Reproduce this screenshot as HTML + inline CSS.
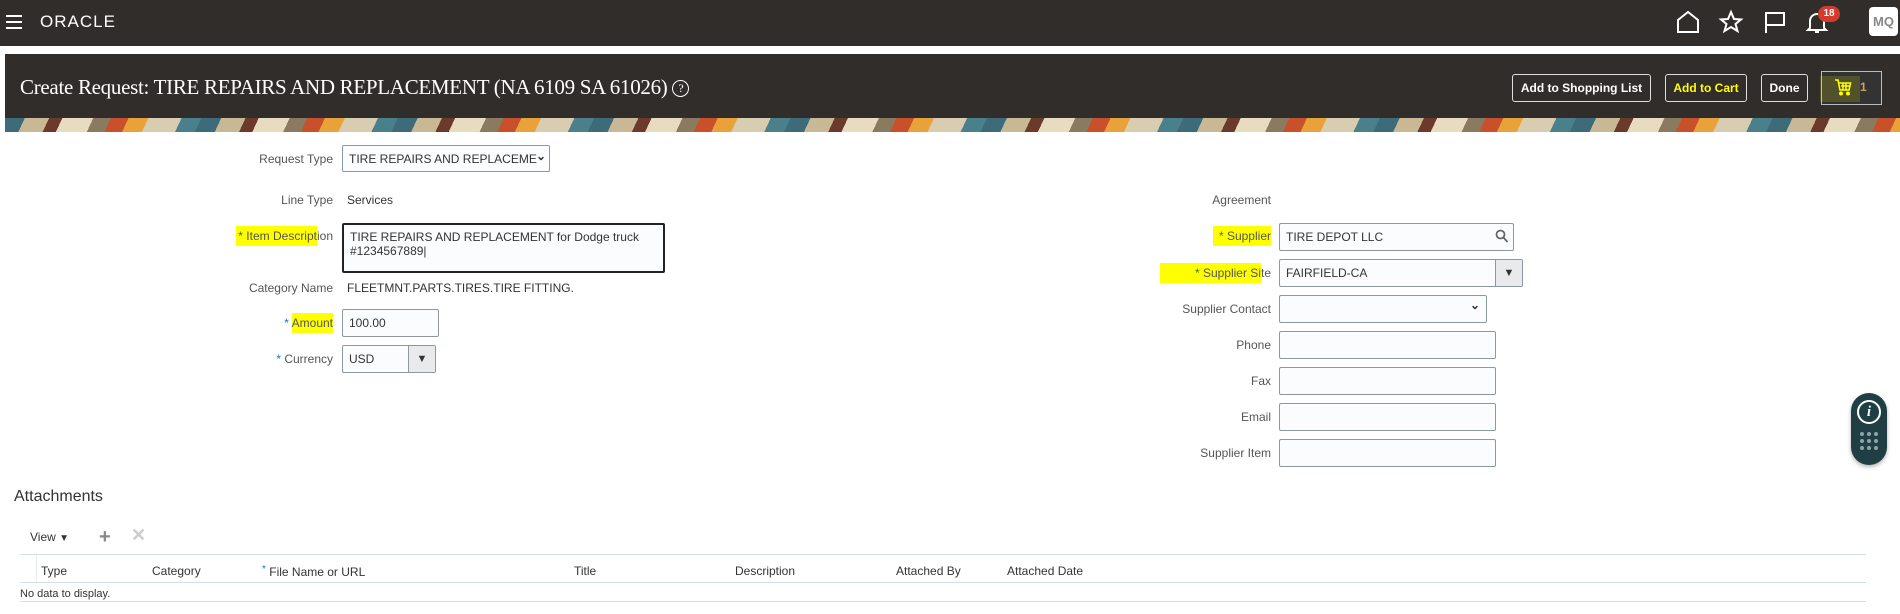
<!DOCTYPE html>
<html><head><meta charset="utf-8"><style>
*{box-sizing:border-box;margin:0;padding:0}
body{width:1900px;height:614px;background:#fff;font-family:"Liberation Sans",sans-serif;font-size:12px;color:#333;position:relative;overflow:hidden}
.a{position:absolute}
.top{left:0;top:0;width:1900px;height:46px;background:#312d2a}
.hdr{left:5px;top:54px;width:1895px;height:64px;background:#312d2a}
.band{left:5px;top:118px;width:1895px;height:14px;background:repeating-linear-gradient(115deg,#3d6b7a 0 18px,#c9b896 18px 40px,#6b3a2a 40px 52px,#e8dcc0 52px 80px,#8a7a60 80px 96px,#c8502a 96px 112px,#e9a23a 112px 130px,#d8cdb0 130px 160px,#4a7f8c 160px 178px)}
.btn{top:74px;height:28px;border:1px solid #ddd;border-radius:3px;color:#fff;font-weight:bold;font-size:12px;line-height:26px;text-align:center}
.lbl{text-align:right;width:300px;color:#555}
.inp{border:1px solid #8c98a4;background:#fbfcfd;border-radius:2px;height:28px;padding-left:6px;line-height:26px;color:#333}
.hl{background:#ffff00}
.st{color:#1a73c8}
.th{top:564px;color:#333;font-size:12px}
</style></head><body>
<div class="a top"></div>
<div class="a" style="left:6px;top:15px;width:16px;height:2px;background:#fff;box-shadow:0 6px 0 #fff,0 12px 0 #fff"></div>
<div class="a" style="left:40px;top:12px;color:#fff;font-size:17px;letter-spacing:1px">ORACLE</div>
<svg class="a" style="left:1675px;top:9px" width="26" height="26" viewBox="0 0 26 26" fill="none" stroke="#fff" stroke-width="2"><path d="M3 11 L13 3 L23 11 V23 H3 Z"/></svg>
<svg class="a" style="left:1718px;top:9px" width="26" height="26" viewBox="0 0 26 26" fill="none" stroke="#fff" stroke-width="2"><path d="M13 3 L16 10 L23 10.5 L17.5 15 L19.5 22 L13 18 L6.5 22 L8.5 15 L3 10.5 L10 10 Z"/></svg>
<svg class="a" style="left:1762px;top:9px" width="26" height="26" viewBox="0 0 26 26" fill="none" stroke="#fff" stroke-width="2"><path d="M4 24 V4 H22 V16 H4"/></svg>
<svg class="a" style="left:1804px;top:9px" width="26" height="26" viewBox="0 0 26 26" fill="none" stroke="#fff" stroke-width="2"><path d="M6 19 V12 A7 7 0 0 1 20 12 V19 L22 21 H4 Z M11 23 H15"/></svg>
<div class="a" style="left:1818px;top:6px;width:22px;height:16px;border-radius:8px;background:#d33b2c;color:#fff;font-size:10px;font-weight:bold;text-align:center;line-height:16px">18</div>
<div class="a" style="left:1869px;top:7px;width:29px;height:29px;background:#fff;border-radius:4px;color:#888;font-size:13px;font-weight:bold;text-align:center;line-height:29px">MQ</div>

<div class="a hdr"></div><div class="a band"></div>
<div class="a" style="left:20px;top:75px;color:#fff;font-family:'Liberation Serif',serif;font-size:21px;letter-spacing:-0.3px">Create Request: TIRE REPAIRS AND REPLACEMENT (NA 6109 SA 61026) <span style="display:inline-block;width:17px;height:17px;border:1.5px solid #fff;border-radius:50%;font-size:12px;text-align:center;line-height:15px;vertical-align:2px">?</span></div>
<div class="a btn" style="left:1512px;width:139px">Add to Shopping List</div>
<div class="a btn" style="left:1665px;width:82px;color:#ffff00">Add to Cart</div>
<div class="a btn" style="left:1761px;width:47px">Done</div>
<div class="a" style="left:1821px;top:71px;width:61px;height:34px;border:1px solid #bbb;background:#333"></div>
<div class="a" style="left:1820px;top:76px;width:40px;height:26px;background:#ffff00;opacity:.15"></div>
<svg class="a" style="left:1834px;top:78px" width="18" height="18" viewBox="0 0 18 18" fill="none" stroke="#ffff00" stroke-width="1.6"><path d="M1 2 H4 L6 12 H15 L16.5 5 H5 M7 8 H16 M9 5 V12 M12 5 V12"/><circle cx="7" cy="15.5" r="1.2" fill="#ffff00"/><circle cx="14" cy="15.5" r="1.2" fill="#ffff00"/></svg>
<div class="a" style="left:1860px;top:80px;color:#c9a55a;font-weight:bold">1</div>

<div class="a lbl" style="left:33px;top:152px">Request Type</div>
<div class="a inp" style="left:342px;top:145px;width:208px;height:27px;white-space:nowrap;overflow:hidden;padding-right:18px">TIRE REPAIRS AND REPLACEME</div>
<div class="a" style="left:536px;top:149px;font-size:12px;font-weight:bold">&#8964;</div>
<div class="a lbl" style="left:33px;top:193px">Line Type</div>
<div class="a" style="left:347px;top:193px">Services</div>
<div class="a lbl" style="left:33px;top:229px"><span class="hl" style="padding:3px 0 3px 2px"><span style="color:#2a7d2a">*</span> Item Descript</span>ion</div>
<div class="a inp" style="left:342px;top:223px;width:323px;height:50px;border:2px solid #222;line-height:14px;padding-top:5px;white-space:nowrap;overflow:hidden">TIRE REPAIRS AND REPLACEMENT for Dodge truck<br>#1234567889|</div>
<div class="a lbl" style="left:33px;top:281px">Category Name</div>
<div class="a" style="left:347px;top:281px">FLEETMNT.PARTS.TIRES.TIRE FITTING.</div>
<div class="a lbl" style="left:33px;top:316px"><span class="st">*</span> <span class="hl" style="padding:3px 0">Amount</span></div>
<div class="a inp" style="left:342px;top:309px;width:97px">100.00</div>
<div class="a lbl" style="left:33px;top:352px"><span class="st">*</span> Currency</div>
<div class="a inp" style="left:342px;top:345px;width:94px;height:28px">USD</div>
<div class="a" style="left:408px;top:346px;width:27px;height:26px;background:#e8eaec;border-left:1px solid #8c98a4;text-align:center;line-height:26px;font-size:11px">&#9660;</div>

<div class="a lbl" style="left:971px;top:193px">Agreement</div>
<div class="a lbl" style="left:971px;top:229px"><span class="hl" style="padding:3px 0 3px 6px"><span style="color:#2a7d2a">*</span> Supplier</span></div>
<div class="a inp" style="left:1279px;top:223px;width:235px">TIRE DEPOT LLC</div>
<svg class="a" style="left:1495px;top:229px" width="14" height="15" viewBox="0 0 14 15" fill="none" stroke="#666" stroke-width="1.8"><circle cx="5.5" cy="5.5" r="4"/><path d="M8.5 8.5 L12.5 13"/></svg>
<div class="a lbl" style="left:971px;top:266px"><span class="hl" style="padding:3px 0 3px 35px"><span style="color:#2a7d2a">*</span> Supplier Si</span>te</div>
<div class="a inp" style="left:1279px;top:259px;width:244px">FAIRFIELD-CA</div>
<div class="a" style="left:1495px;top:260px;width:27px;height:26px;background:#e8eaec;border-left:1px solid #8c98a4;text-align:center;line-height:26px;font-size:11px">&#9660;</div>
<div class="a lbl" style="left:971px;top:302px">Supplier Contact</div>
<div class="a inp" style="left:1279px;top:295px;width:208px"></div>
<div class="a" style="left:1470px;top:298px;font-size:12px;font-weight:bold">&#8964;</div>
<div class="a lbl" style="left:971px;top:338px">Phone</div>
<div class="a inp" style="left:1279px;top:331px;width:217px"></div>
<div class="a lbl" style="left:971px;top:374px">Fax</div>
<div class="a inp" style="left:1279px;top:367px;width:217px"></div>
<div class="a lbl" style="left:971px;top:410px">Email</div>
<div class="a inp" style="left:1279px;top:403px;width:217px"></div>
<div class="a lbl" style="left:971px;top:446px">Supplier Item</div>
<div class="a inp" style="left:1279px;top:439px;width:217px"></div>

<div class="a" style="left:1851px;top:393px;width:36px;height:72px;border-radius:18px;background:#1f3f44;box-shadow:0 2px 4px rgba(0,0,0,.3)"></div>
<div class="a" style="left:1857px;top:400px;width:24px;height:24px;border:2px solid #fff;border-radius:50%;color:#fff;font-family:'Liberation Serif',serif;font-style:italic;font-weight:bold;font-size:15px;text-align:center;line-height:20px">i</div>
<svg class="a" style="left:1859px;top:431px" width="20" height="20" viewBox="0 0 20 20" fill="#8fa3a6"><circle cx="3" cy="3" r="2"/><circle cx="10" cy="3" r="2"/><circle cx="17" cy="3" r="2"/><circle cx="3" cy="10" r="2"/><circle cx="10" cy="10" r="2"/><circle cx="17" cy="10" r="2"/><circle cx="3" cy="17" r="2"/><circle cx="10" cy="17" r="2"/><circle cx="17" cy="17" r="2"/></svg>

<div class="a" style="left:14px;top:488px;font-size:16px;color:#333">Attachments</div>
<div class="a" style="left:30px;top:530px;font-size:12px">View <span style="font-size:10px">&#9660;</span></div>
<div class="a" style="left:99px;top:526px;color:#888;font-size:20px;font-weight:bold">+</div>
<div class="a" style="left:131px;top:525px;color:#ccc;font-size:18px;font-weight:bold">&#10005;</div>
<div class="a" style="left:20px;top:554px;width:1846px;height:1px;background:#d6dfe6"></div>
<div class="a" style="left:36px;top:555px;width:1px;height:27px;background:#e6ecf0"></div>
<div class="a th" style="left:41px">Type</div>
<div class="a th" style="left:152px">Category</div>
<div class="a th" style="left:262px"><span class="st" style="font-size:10px;vertical-align:4px">*</span> File Name or URL</div>
<div class="a th" style="left:574px">Title</div>
<div class="a th" style="left:735px">Description</div>
<div class="a th" style="left:896px">Attached By</div>
<div class="a th" style="left:1007px">Attached Date</div>
<div class="a" style="left:20px;top:582px;width:1846px;height:1px;background:#d6dfe6"></div>
<div class="a" style="left:20px;top:588px;font-size:11px">No data to display.</div>
<div class="a" style="left:20px;top:601px;width:1846px;height:1px;background:#d6dfe6"></div>
</body></html>
